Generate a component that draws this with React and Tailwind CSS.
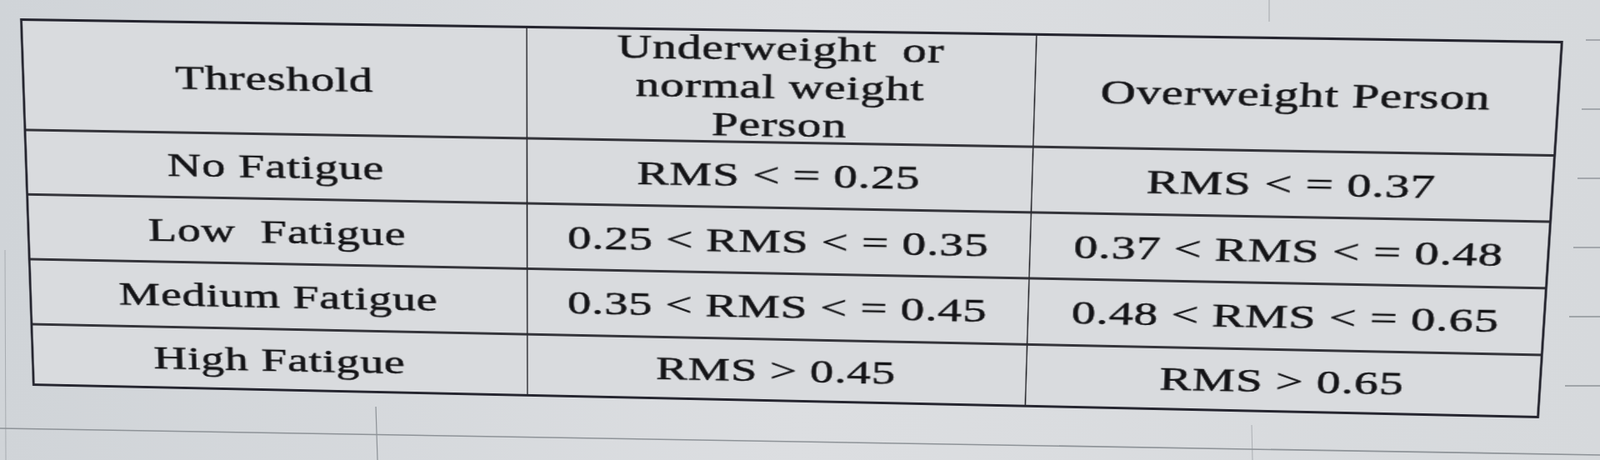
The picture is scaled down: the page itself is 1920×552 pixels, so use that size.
import React from "react";

// table drawn flat, then warped to the photo's perspective
const W = 1277;
const H = 447;
// corners of the table in the photo, relative to its top-left: TL, TR, BR, BL
const CORNERS = [
  [0, 0],
  [1852, 27],
  [1823, 480],
  [15, 441],
];

function quadMatrix(p, w, h) {
  const [[x0, y0], [x1, y1], [x2, y2], [x3, y3]] = p;
  const dx1 = x1 - x2, dx2 = x3 - x2, dx3 = x0 - x1 + x2 - x3;
  const dy1 = y1 - y2, dy2 = y3 - y2, dy3 = y0 - y1 + y2 - y3;
  const den = dx1 * dy2 - dx2 * dy1;
  const g = (dx3 * dy2 - dx2 * dy3) / den;
  const k = (dx1 * dy3 - dx3 * dy1) / den;
  const a = x1 - x0 + g * x1;
  const b = x3 - x0 + k * x3;
  const d = y1 - y0 + g * y1;
  const e = y3 - y0 + k * y3;
  const m = [a / w, d / w, 0, g / w, b / h, e / h, 0, k / h, 0, 0, 1, 0, x0, y0, 0, 1];
  return `matrix3d(${m.join(",")})`;
}

const rows = [
  ["Threshold", "Underweight  or\nnormal weight\nPerson", "Overweight Person"],
  ["No Fatigue", "RMS < = 0.25", "RMS < = 0.37"],
  ["Low  Fatigue", "0.25 < RMS < = 0.35", "0.37 < RMS < = 0.48"],
  ["Medium Fatigue", "0.35 < RMS < = 0.45", "0.48 < RMS < = 0.65"],
  ["High Fatigue", "RMS > 0.45", "RMS > 0.65"],
];

function Cell({ text, lastRow, lastCol }) {
  return (
    <div
      className={`flex items-center justify-center text-center whitespace-pre leading-[45px] ${
        lastRow ? "" : "border-b-[3px] border-b-[#34343a]"
      } ${lastCol ? "" : "border-r border-r-[#1f1f24]"}`}
    >
      {text}
    </div>
  );
}

function Background() {
  return (
    <svg className="absolute inset-0" width="1920" height="552" viewBox="0 0 1920 552">
      <g stroke="#8e9398" fill="none">
        <line x1="0" y1="514" x2="1920" y2="546" strokeWidth="1.6" />
        <line x1="451" y1="488" x2="453" y2="552" strokeWidth="1.2" />
        <line x1="1502" y1="510" x2="1503" y2="552" strokeWidth="1" opacity="0.6" />
        <line x1="6" y1="300" x2="7" y2="552" strokeWidth="1" opacity="0.6" />
        <line x1="1523" y1="0" x2="1523" y2="26" strokeWidth="1" opacity="0.7" />
        <line x1="1903" y1="48" x2="1920" y2="48" strokeWidth="1.4" />
        <line x1="1898" y1="131" x2="1920" y2="131" strokeWidth="1.4" />
        <line x1="1893" y1="214" x2="1920" y2="214" strokeWidth="1.4" />
        <line x1="1888" y1="297" x2="1920" y2="297" strokeWidth="1.4" />
        <line x1="1883" y1="380" x2="1920" y2="380" strokeWidth="1.4" />
        <line x1="1878" y1="463" x2="1920" y2="463" strokeWidth="1.4" />
      </g>
    </svg>
  );
}

export default function App() {
  return (
    <div className="relative w-[1920px] h-[552px] overflow-hidden bg-gradient-to-r from-[#d0d4d8] via-[#dcdee1] to-[#d6d9dc]">
      <Background />

      <div className="relative pl-[24px] pt-[22px]">
        <div
          className="origin-top-left w-[1277px] h-[447px] grid grid-cols-[426px_422px_425px] grid-rows-[132px_78px_79px_80px_72px] border-y-[3px] border-x-2 border-[#25252f] bg-[#d9dbde] font-['Liberation_Serif',serif] text-[40px] tracking-[0.6px] text-[#141417] [-webkit-text-stroke:0.55px_#141417] blur-[0.4px]"
          style={{ transform: quadMatrix(CORNERS, W, H) }}
        >
          {rows.map((row, r) =>
            row.map((text, c) => (
              <Cell key={`${r}-${c}`} text={text} lastRow={r === rows.length - 1} lastCol={c === row.length - 1} />
            ))
          )}
        </div>
      </div>
    </div>
  );
}
